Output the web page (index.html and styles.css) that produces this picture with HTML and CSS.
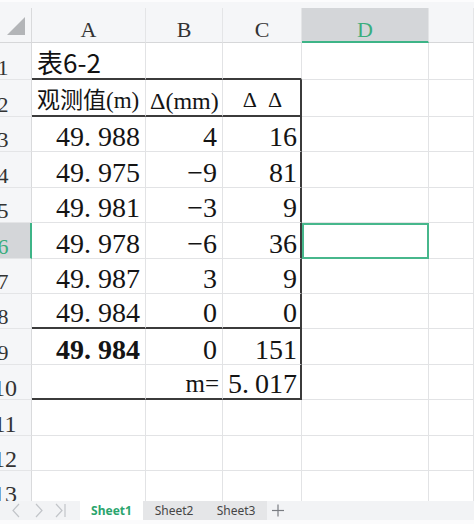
FILE: index.html
```html
<!DOCTYPE html>
<html lang="zh">
<head>
<meta charset="utf-8">
<title>Sheet1</title>
<link rel="stylesheet" href="styles.css">
</head>
<body>
<div class="app">
  <div class="top"></div>
  <div class="grid">
    <div class="corner"><svg width="32" height="35" viewBox="0 0 32 35"><polygon points="25,9 25,27 7,27" fill="#b3b5b8"/></svg></div>
    <div class="ch">A</div>
    <div class="ch">B</div>
    <div class="ch">C</div>
    <div class="ch sel">D</div>
    <div class="ch"></div>

    <div class="rh"><span class="n">1</span></div>
    <div class="c tb title">表6-2</div>
    <div class="c tb"></div>
    <div class="c tb"></div>
    <div class="c"></div>
    <div class="c"></div>

    <div class="rh"><span class="n">2</span></div>
    <div class="c tb lbl">观测值(m)</div>
    <div class="c tb lbl lb">Δ(mm)</div>
    <div class="c tb tr dd">Δ&nbsp;&nbsp;Δ</div>
    <div class="c"></div>
    <div class="c"></div>

    <div class="rh"><span class="n">3</span></div>
    <div class="c r">49<span class="dot">.</span>988</div>
    <div class="c r">4</div>
    <div class="c r tr">16</div>
    <div class="c"></div>
    <div class="c"></div>

    <div class="rh"><span class="n">4</span></div>
    <div class="c r">49<span class="dot">.</span>975</div>
    <div class="c r">−9</div>
    <div class="c r tr">81</div>
    <div class="c"></div>
    <div class="c"></div>

    <div class="rh"><span class="n">5</span></div>
    <div class="c r">49<span class="dot">.</span>981</div>
    <div class="c r">−3</div>
    <div class="c r tr">9</div>
    <div class="c"></div>
    <div class="c"></div>

    <div class="rh sel"><span class="n">6</span></div>
    <div class="c r">49<span class="dot">.</span>978</div>
    <div class="c r">−6</div>
    <div class="c r tr">36</div>
    <div class="c cur"></div>
    <div class="c"></div>

    <div class="rh"><span class="n">7</span></div>
    <div class="c r">49<span class="dot">.</span>987</div>
    <div class="c r">3</div>
    <div class="c r tr">9</div>
    <div class="c"></div>
    <div class="c"></div>

    <div class="rh"><span class="n">8</span></div>
    <div class="c r tb">49<span class="dot">.</span>984</div>
    <div class="c r tb">0</div>
    <div class="c r tb tr">0</div>
    <div class="c"></div>
    <div class="c"></div>

    <div class="rh"><span class="n">9</span></div>
    <div class="c r bold">49<span class="dot">.</span>984</div>
    <div class="c r">0</div>
    <div class="c r tr">151</div>
    <div class="c"></div>
    <div class="c"></div>

    <div class="rh"><span class="n two">10</span></div>
    <div class="c tb"></div>
    <div class="c r tb meq">m=</div>
    <div class="c r tb tr">5<span class="dot">.</span>017</div>
    <div class="c"></div>
    <div class="c"></div>

    <div class="rh"><span class="n two">11</span></div>
    <div class="c"></div>
    <div class="c"></div>
    <div class="c"></div>
    <div class="c"></div>
    <div class="c"></div>

    <div class="rh"><span class="n two">12</span></div>
    <div class="c"></div>
    <div class="c"></div>
    <div class="c"></div>
    <div class="c"></div>
    <div class="c"></div>

    <div class="rh"><span class="n two">13</span></div>
    <div class="c"></div>
    <div class="c"></div>
    <div class="c"></div>
    <div class="c"></div>
    <div class="c"></div>
  </div>
  <div class="tabs">
    <div class="nav">
      <svg width="80" height="19" viewBox="0 0 80 19">
        <polyline points="19,3 13,9.5 19,16" fill="none" stroke="#c2c5c9" stroke-width="1.2"/>
        <polyline points="36,3 42,9.5 36,16" fill="none" stroke="#c2c5c9" stroke-width="1.2"/>
        <polyline points="56,3 62,9.5 56,16" fill="none" stroke="#c2c5c9" stroke-width="1.2"/>
        <line x1="65" y1="3" x2="65" y2="16" stroke="#c2c5c9" stroke-width="1.2"/>
      </svg>
    </div>
    <div class="tab on">Sheet1</div>
    <div class="tab">Sheet2</div>
    <div class="tab">Sheet3</div>
    <div class="add">
      <svg width="24" height="19" viewBox="0 0 24 19">
        <line x1="5" y1="9.5" x2="17" y2="9.5" stroke="#7a7d82" stroke-width="1.2"/>
        <line x1="11" y1="3.5" x2="11" y2="15.5" stroke="#7a7d82" stroke-width="1.2"/>
      </svg>
    </div>
  </div>
  <div class="foot"></div>
</div>
</body>
</html>
```

FILE: styles.css
```css
html, body {
  margin: 0;
  padding: 0;
  background: #fff;
}

.app {
  width: 474px;
  height: 524px;
  display: flex;
  flex-direction: column;
  overflow: hidden;
  background: #fff;
}

.top {
  height: 8px;
  flex: none;
  box-sizing: border-box;
  background: #f5f6f8;
  border-top: 2px solid #fcfcfd;
}

.grid {
  flex: none;
  height: 493px;
  overflow: hidden;
  display: grid;
  grid-template-columns: 32px 114px 77px 79px 127px 45px;
  grid-template-rows: 35px 37px 37px repeat(11, 35.4px);
}

.grid > div {
  box-sizing: border-box;
  min-width: 0;
}

.corner {
  background: #f5f6f8;
  border-right: 1px solid #d9dadc;
  border-bottom: 1px solid #d6d7d9;
}

.corner svg {
  display: block;
}

.ch {
  background: #f5f6f8;
  border-right: 1px solid #e4e5e7;
  border-bottom: 1px solid #d6d7d9;
  display: flex;
  align-items: flex-end;
  justify-content: center;
  font: 22px/22px "Liberation Serif", serif;
  color: #333;
  padding-bottom: 1px;
}

.ch.sel {
  background: #d4d6d9;
  color: #3aad7d;
  border-bottom: 2px solid #3db487;
  padding-bottom: 0;
}

.rh {
  background: #f5f6f8;
  border-right: 1px solid #d9dadc;
  border-bottom: 1px solid #e4e5e7;
  overflow: hidden;
  display: flex;
  align-items: flex-end;
  font: 22px/22px "Liberation Serif", serif;
  color: #333;
}

.rh .n {
  flex: none;
  width: 40px;
  margin-left: -17px;
  text-align: center;
}

.rh .n.two {
  font-size: 24px;
  margin-left: -15px;
}

.rh.sel {
  background: #d4d6d9;
  color: #3aad7d;
  border-right: 2px solid #3db487;
}

.c {
  border-right: 1px solid #e2e3e5;
  border-bottom: 1px solid #e2e3e5;
  display: flex;
  align-items: flex-end;
  padding: 0 5px 0 5px;
  font: 28px/28px "Liberation Serif", serif;
  color: #141414;
  white-space: nowrap;
}

.c.r {
  justify-content: flex-end;
}

.c.tb {
  border-bottom: 2px solid #3b3b3b;
}

.c.tr {
  border-right: 2px solid #3b3b3b;
  padding-right: 3px;
}

.c.cur {
  outline: 2px solid #47b78c;
  outline-offset: -2px;
}

.dot {
  display: inline-block;
  width: 0.5em;
}

.bold {
  font-weight: bold;
}

.title {
  font: 26px/26px "Noto Sans CJK SC", "Noto Sans", sans-serif;
  color: #111;
  padding-bottom: 3px;
}

.lbl {
  font: 23px/24px "Liberation Serif", "Noto Sans CJK SC", serif;
  padding-bottom: 2px;
}

.lbl.lb {
  font-size: 24px;
  padding-left: 4px;
}

.dd {
  font: 22px/24px "Liberation Serif", serif;
  justify-content: center;
  padding-bottom: 3px;
}

.meq {
  font-size: 25px;
  padding-right: 3px;
}

.tabs {
  flex: none;
  height: 19px;
  display: flex;
  background: #f2f3f5;
  font: 12px/19px "Noto Sans", sans-serif;
}

.nav {
  width: 80px;
  flex: none;
}

.nav svg, .add svg {
  display: block;
}

.tab {
  flex: none;
  width: 62px;
  text-align: center;
  background: #e5e6e8;
  color: #454545;
}

.tab.on {
  width: 63px;
  background: #fff;
  color: #2ba56d;
  font-weight: bold;
}

.add {
  flex: none;
  width: 24px;
}

.foot {
  flex: 1;
  background: #fbfbfc;
}
```
